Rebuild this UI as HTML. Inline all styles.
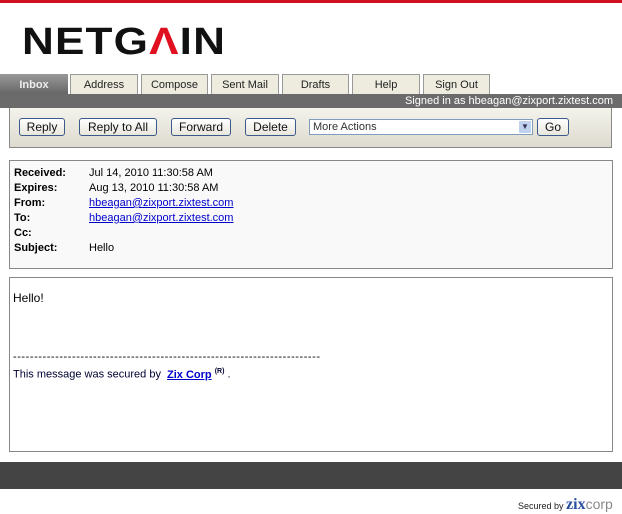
<!DOCTYPE html>
<html><head><style>
body{margin:0;width:622px;height:511px;position:relative;background:#fff;font-family:"Liberation Sans",Arial,sans-serif;font-size:11px;overflow:hidden}
.a{position:absolute}
.tab{position:absolute;top:74px;height:20px;background:#eeecdf;border:1px solid #999;border-bottom:none;box-sizing:border-box;text-align:center;line-height:20px;color:#222}
.btn{position:absolute;top:118px;height:18px;border:1px solid #3a5a8a;border-radius:3px;background:linear-gradient(#fff,#e8e6dc);box-sizing:border-box;text-align:center;line-height:16px;font-size:12px;color:#111}
.lbl{position:absolute;left:14px;font-weight:bold}
.val{position:absolute;left:89px}
a{color:#00c;text-decoration:underline}
</style></head><body>
<div class="a" style="left:0;top:0;width:622px;height:3px;background:#d01020"></div>
<div class="a" style="left:22px;top:20px;font:900 38px 'Liberation Sans',sans-serif;letter-spacing:1px;color:#111;transform:scaleX(1.16);transform-origin:left;line-height:44px">NETG<span style="color:#e01020">&#923;</span>IN</div>
<div class="a" style="left:0;top:74px;width:68px;height:20px;background:linear-gradient(#999,#666);color:#eee;text-align:center;line-height:22px;font-weight:bold">Inbox</div>
<div class="tab" style="left:70px;width:68px">Address</div>
<div class="tab" style="left:141px;width:67px">Compose</div>
<div class="tab" style="left:211px;width:68px">Sent Mail</div>
<div class="tab" style="left:282px;width:67px">Drafts</div>
<div class="tab" style="left:352px;width:68px">Help</div>
<div class="tab" style="left:423px;width:67px">Sign Out</div>
<div class="a" style="left:0;top:94px;width:622px;height:14px;background:#6b6b6b;color:#fff;text-align:right;line-height:14px;font-size:11px"><span style="margin-right:9px">Signed in as hbeagan@zixport.zixtest.com</span></div>
<div class="a" style="left:9px;top:108px;width:603px;height:40px;background:linear-gradient(#f4f3ec,#dddbcf);border:1px solid #888;border-top:none;box-sizing:border-box"></div>
<div class="btn" style="left:19px;width:46px">Reply</div>
<div class="btn" style="left:79px;width:78px">Reply to All</div>
<div class="btn" style="left:171px;width:60px">Forward</div>
<div class="btn" style="left:245px;width:51px">Delete</div>
<div class="a" style="left:309px;top:119px;width:224px;height:16px;border:1px solid #7f9db9;background:#fff;box-sizing:border-box;line-height:14px;padding-left:3px;font-size:11px;color:#333">More Actions<div class="a" style="right:1px;top:1px;width:12px;height:12px;background:#c1d2ee;font-size:8px;text-align:center;line-height:12px;color:#335">&#9660;</div></div>
<div class="btn" style="left:537px;width:32px">Go</div>
<div class="a" style="left:9px;top:160px;width:604px;height:109px;border:1px solid #888;box-sizing:border-box;background:#f9f9f9"></div>
<div class="lbl" style="top:167px">Received:</div><div class="val" style="top:167px">Jul 14, 2010 11:30:58 AM</div>
<div class="lbl" style="top:182px">Expires:</div><div class="val" style="top:182px">Aug 13, 2010 11:30:58 AM</div>
<div class="lbl" style="top:197px">From:</div><div class="val" style="top:197px"><a>hbeagan@zixport.zixtest.com</a></div>
<div class="lbl" style="top:212px">To:</div><div class="val" style="top:212px"><a>hbeagan@zixport.zixtest.com</a></div>
<div class="lbl" style="top:227px">Cc:</div>
<div class="lbl" style="top:242px">Subject:</div><div class="val" style="top:242px">Hello</div>
<div class="a" style="left:9px;top:277px;width:604px;height:175px;border:1px solid #888;box-sizing:border-box;background:#fff"></div>
<div class="a" style="left:13px;top:291px;font-size:12px">Hello!</div>
<div class="a" style="left:13px;top:351px;font-size:11px;letter-spacing:0.55px">-------------------------------------------------------------------------</div>
<div class="a" style="left:13px;top:368px;color:#003;font-size:11px">This message was secured by <a style="font-weight:bold;margin-left:3px">Zix Corp</a> <sup style="font-size:7px;font-weight:bold">(R)</sup> .</div>
<div class="a" style="left:0;top:462px;width:622px;height:27px;background:#444"></div>
<div class="a" style="left:518px;top:496px;font-size:9px;color:#222">Secured by <span style="font:bold 16px 'Liberation Serif',serif;color:#2a4fa0">zix</span><span style="font-size:14px;color:#888">corp</span></div>
</body></html>
